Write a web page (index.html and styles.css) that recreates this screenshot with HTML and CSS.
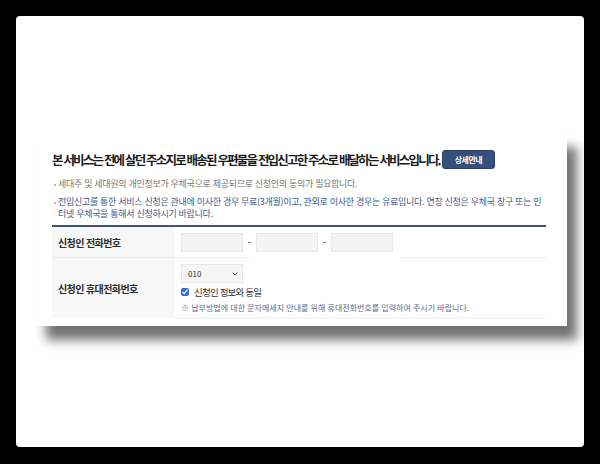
FILE: index.html
```html
<!DOCTYPE html>
<html lang="ko">
<head>
<meta charset="utf-8">
<title>전입신고 우편물 전송 서비스</title>
<link rel="stylesheet" href="styles.css">
</head>
<body>
<div class="frame">
  <div class="card">
    <div class="head">
      <h2 class="title">본 서비스는 전에 살던 주소지로 배송된 우편물을 전입신고한 주소로 배달하는 서비스입니다.</h2>
      <button class="btn" type="button">상세안내</button>
    </div>
    <ul class="notes">
      <li class="gray">세대주 및 세대원의 개인정보가 우체국으로 제공되므로 신청인의 동의가 필요합니다.</li>
      <li class="blue">전입신고를 통한 서비스 신청은 관내에 이사한 경우 무료(3개월)이고, 관외로 이사한 경우는 유료입니다. 연장 신청은 우체국 창구 또는 인터넷 우체국을 통해서 신청하시기 바랍니다.</li>
    </ul>
    <div class="table">
      <div class="row r1">
        <div class="th">신청인 전화번호</div>
        <div class="td phone">
          <span class="inp"></span><span class="dash"></span><span class="inp"></span><span class="dash"></span><span class="inp"></span>
        </div>
      </div>
      <div class="sep"></div>
      <div class="row r2">
        <div class="th">신청인 휴대전화번호</div>
        <div class="td mobile">
          <div class="sel"><span>010</span><svg class="chev" width="6" height="4" viewBox="0 0 6 4"><path d="M0.7 0.7 L3 3 L5.3 0.7" fill="none" stroke="#444" stroke-width="1"/></svg></div>
          <label class="chk"><input type="checkbox" checked><span>신청인 정보와 동일</span></label>
          <div class="hint">※ 납부방법에 대한 문자메세지 안내를 위해 휴대전화번호를 입력하여 주시기 바랍니다.</div>
        </div>
      </div>
      <div class="endline"></div>
    </div>
  </div>
</div>
</body>
</html>
```
FILE: styles.css
```css
html, body {
  margin: 0;
  background: #000;
}
body {
  font-family: "Noto Sans CJK KR", "Noto Sans", sans-serif;
}
.frame {
  margin: 16px;
  width: 568px;
  height: 431px;
  box-sizing: border-box;
  background: #fff;
  border-radius: 4px;
  padding: 117px 0 0 20px;
  overflow: hidden;
}
.card {
  width: 531px;
  box-sizing: border-box;
  padding: 17px 21px 7px 16px;
  background: #fff;
  box-shadow: 10px 14px 10px rgba(0, 0, 0, 0.55);
}
.head {
  display: flex;
  align-items: center;
  height: 19px;
}
.title {
  margin: 0;
  font-size: 12.5px;
  font-weight: 700;
  letter-spacing: -1.8px;
  line-height: 19px;
  color: #1b1b1b;
  white-space: nowrap;
}
.btn {
  margin: 0 0 0 2px;
  padding: 0;
  width: 53px;
  height: 19px;
  border: 1px solid #2a4268;
  border-radius: 3px;
  background: #34507b;
  color: #fff;
  font-family: inherit;
  font-size: 8px;
  font-weight: 700;
  letter-spacing: -0.6px;
  line-height: 17px;
}
.notes {
  list-style: none;
  margin: 9px 0 0;
  padding: 0;
}
.notes li {
  font-size: 9px;
  letter-spacing: -0.3px;
  line-height: 12px;
  padding-left: 6px;
}
.notes li::before {
  content: "";
  display: inline-block;
  width: 2px;
  height: 2px;
  background: #b5b5b5;
  margin-left: -4px;
  margin-right: 2px;
  vertical-align: middle;
}
.notes li + li {
  margin-top: 6px;
}
.gray {
  color: #777;
}
.blue {
  color: #41598a;
}
.table {
  margin-top: 5px;
  border-top: 2px solid #3b5478;
}
.row {
  display: flex;
}
.r1 {
  height: 30px;
}
.r2 {
  height: 60px;
}
.th {
  width: 123px;
  flex: none;
  box-sizing: border-box;
  padding-left: 6px;
  background: #f7f7f7;
  display: flex;
  align-items: center;
  font-size: 10px;
  font-weight: 700;
  letter-spacing: -0.6px;
  color: #2b2b2b;
}
.td {
  flex: 1;
  padding-left: 6px;
}
.phone {
  display: flex;
  align-items: center;
}
.inp {
  width: 62px;
  height: 19px;
  box-sizing: border-box;
  background: #f4f4f4;
  border: 1px solid #e8e8e8;
}
.dash {
  width: 13px;
  height: 1px;
  display: flex;
  justify-content: center;
}
.dash::before {
  content: "";
  width: 3px;
  height: 1px;
  background: #777;
}
.sep {
  height: 1px;
  background: linear-gradient(to right, #ececec 0 197px, #fff 197px 349px, #ececec 349px);
}
.mobile {
  display: flex;
  flex-direction: column;
  align-items: flex-start;
  padding-top: 6px;
}
.sel {
  width: 62px;
  height: 19px;
  box-sizing: border-box;
  background: #f5f5f5;
  border: 1px solid #e6e6e6;
  display: flex;
  align-items: center;
  justify-content: space-between;
  padding: 0 4px 0 6px;
  font-size: 8px;
  color: #333;
}
.chev {
  display: block;
}
.chk {
  margin-top: 3px;
  height: 12px;
  display: flex;
  align-items: center;
  font-size: 9.5px;
  letter-spacing: -0.8px;
  color: #333;
}
.chk input {
  margin: 0 5px 0 0;
  width: 8px;
  height: 8px;
  accent-color: #2b6de0;
}
.hint {
  margin-top: 4px;
  font-size: 8px;
  letter-spacing: 0;
  line-height: 11px;
  color: #5a6c90;
  white-space: nowrap;
}
.endline {
  height: 1px;
  background: linear-gradient(to right, transparent 0 123px, #f0f0f0 123px);
}
```
